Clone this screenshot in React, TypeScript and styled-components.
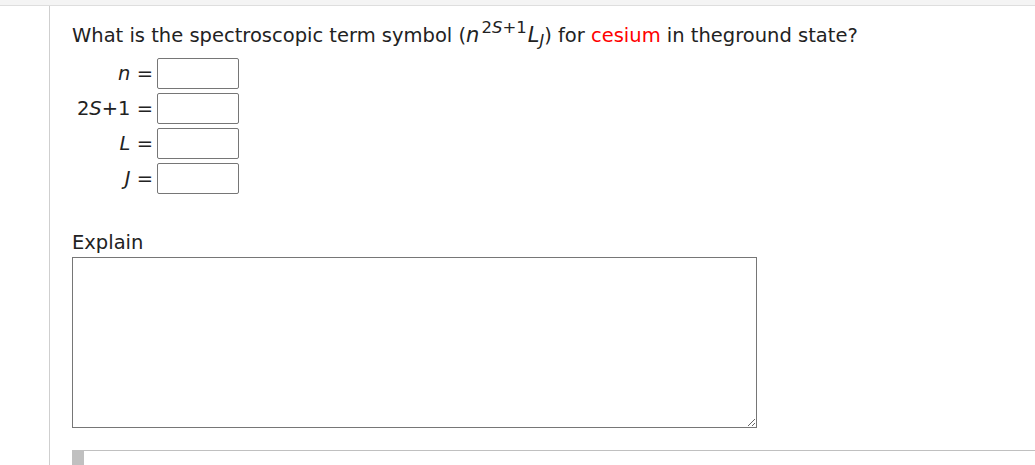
import * as React from 'react';
import styled, { createGlobalStyle } from 'styled-components';

const GlobalStyle = createGlobalStyle`
  html, body {
    margin: 0;
    padding: 0;
    background: #ffffff;
  }
  body {
    font-family: 'DejaVu Sans', Verdana, sans-serif;
    color: #222222;
    overflow: hidden;
  }
`;

const Page = styled.div`
  display: flex;
  flex-direction: column;
  width: 1035px;
  height: 465px;
  overflow: hidden;
`;

const TopBand = styled.div`
  height: 5px;
  background: #f4f4f4;
  border-bottom: 1px solid #dedede;
`;

const Main = styled.div`
  display: flex;
  flex: 1;
  min-height: 0;
`;

const Gutter = styled.div`
  width: 49px;
  border-right: 1px solid #cfcfcf;
`;

const Content = styled.div`
  flex: 1;
  padding: 16px 0 0 22px;
  font-size: 19.5px;
`;

const Question = styled.p`
  margin: 0;
  line-height: 28px;
  white-space: nowrap;
`;

const Var = styled.i<{ $big?: boolean }>`
  font-style: italic;
  font-size: ${(p) => (p.$big ? '21px' : 'inherit')};
  line-height: ${(p) => (p.$big ? '0' : 'inherit')};
`;

const Sup = styled.sup`
  font-size: 16.5px;
  line-height: 0;
  vertical-align: 9px;
  margin: 0 1px 0 2px;
`;

const Sub = styled.sub`
  font-size: 16px;
  font-style: italic;
  line-height: 0;
  vertical-align: -4px;
`;

const Highlight = styled.span`
  color: #ff0000;
`;

const AnswerGrid = styled.div`
  display: grid;
  grid-template-columns: 81px 82px;
  grid-auto-rows: 31px;
  column-gap: 4px;
  row-gap: 4px;
  margin-top: 8px;
`;

const Label = styled.label`
  text-align: right;
  line-height: 31px;
  white-space: nowrap;
`;

const Field = styled.input`
  box-sizing: border-box;
  width: 82px;
  height: 31px;
  margin: 0;
  border: 1px solid #767676;
  border-radius: 2px;
  background: #ffffff;
  font: inherit;
`;

const SectionTitle = styled.div`
  margin-top: 35px;
  line-height: 28px;
`;

const ExplainBox = styled.textarea`
  display: block;
  box-sizing: border-box;
  width: 685px;
  height: 171px;
  margin: 0;
  border: 1px solid #767676;
  border-radius: 0;
  background: #ffffff;
  resize: both;
  font: inherit;
`;

const Footer = styled.div`
  display: flex;
  height: 15px;
  margin-top: 22px;
`;

const Thumb = styled.div`
  width: 12px;
  background: #c0c0c0;
`;

const Rule = styled.div`
  flex: 1;
  border-top: 1px solid #c0c0c0;
`;

const rows: { key: string; label: React.ReactNode }[] = [
  { key: 'n', label: <><Var>n</Var> =</> },
  { key: 's', label: <>2<Var>S</Var>+1 =</> },
  { key: 'l', label: <><Var>L</Var> =</> },
  { key: 'j', label: <><Var>J</Var> =</> },
];

const App = () => {
  return (
    <Page>
      <GlobalStyle />
      <TopBand />
      <Main>
        <Gutter />
        <Content>
          <Question>
            What is the spectroscopic term symbol (<Var $big>n</Var>
            <Sup>
              2<Var>S</Var>+1
            </Sup>
            <Var $big>L</Var>
            <Sub>J</Sub>) for <Highlight>cesium</Highlight> in theground state?
          </Question>
          <AnswerGrid>
            {rows.map((row) => (
              <React.Fragment key={row.key}>
                <Label htmlFor={`answer-${row.key}`}>{row.label}</Label>
                <Field id={`answer-${row.key}`} type="text" />
              </React.Fragment>
            ))}
          </AnswerGrid>
          <SectionTitle>Explain</SectionTitle>
          <ExplainBox />
          <Footer>
            <Thumb />
            <Rule />
          </Footer>
        </Content>
      </Main>
    </Page>
  );
};

export default App;
